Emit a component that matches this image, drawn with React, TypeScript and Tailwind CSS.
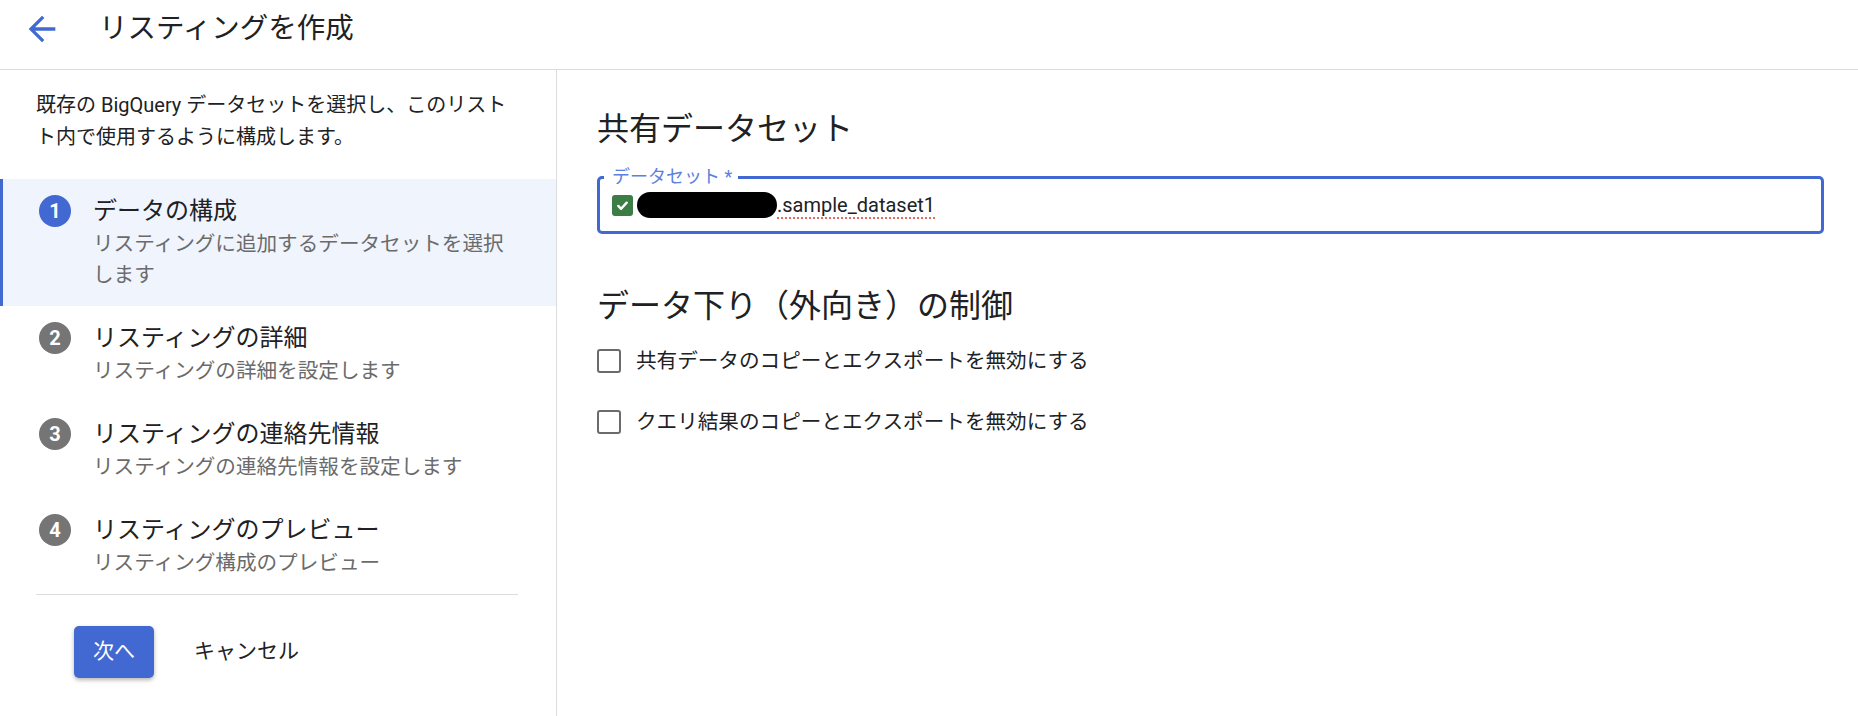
import React from "react";

const steps = [
  { n: 1, title: "データの構成", sub: ["リスティングに追加するデータセットを選択", "します"], active: true },
  { n: 2, title: "リスティングの詳細", sub: ["リスティングの詳細を設定します"], active: false },
  { n: 3, title: "リスティングの連絡先情報", sub: ["リスティングの連絡先情報を設定します"], active: false },
  { n: 4, title: "リスティングのプレビュー", sub: ["リスティング構成のプレビュー"], active: false },
];

const options = [
  "共有データのコピーとエクスポートを無効にする",
  "クエリ結果のコピーとエクスポートを無効にする",
];

function Step({ n, title, sub, active }: { n: number; title: string; sub: string[]; active: boolean }) {
  return (
    <div
      className={`flex border-l-[3px] pl-[36px] pr-[20px] pt-[16px] pb-[15px] ${
        active ? "border-[#4169d1] bg-[#eff4fd]" : "border-transparent"
      }`}
    >
      <div
        className={`flex h-[32px] w-[32px] shrink-0 items-center justify-center rounded-full text-[20px] font-bold text-white ${
          active ? "bg-[#4169d1]" : "bg-[#757575]"
        }`}
      >
        {n}
      </div>
      <div className="ml-[22px]">
        <div className="whitespace-nowrap text-[24px] leading-[32px] text-[#202124]">{title}</div>
        <div className="mt-[2px] whitespace-nowrap text-[20.6px] leading-[31px] text-[#6b6b6b]">
          {sub.map((line) => (
            <div key={line}>{line}</div>
          ))}
        </div>
      </div>
    </div>
  );
}

export default function App() {
  return (
    <div
      className="flex h-[716px] w-full flex-col bg-white text-[#202124]"
      style={{ fontFamily: "Roboto, 'Noto Sans CJK JP', sans-serif" }}
    >
      <header className="flex h-[70px] shrink-0 items-center border-b border-[#dadce0] pb-[11px] pl-[22px]">
        <svg width="40" height="40" viewBox="0 0 24 24" fill="#4169d1">
          <path d="M20 11H7.83l5.59-5.59L12 4l-8 8 8 8 1.41-1.41L7.83 13H20v-2z" />
        </svg>
        <h1 className="ml-[37px] text-[28.5px] leading-[36px] font-normal text-[#202124]">リスティングを作成</h1>
      </header>

      <div className="flex min-h-0 flex-1">
        <aside className="flex w-[557px] shrink-0 flex-col border-r border-[#dadce0]">
          <p className="whitespace-nowrap px-[36px] pt-[19px] text-[20px] leading-[32px] text-[#202124]">
            既存の BigQuery データセットを選択し、このリスト
            <br />
            ト内で使用するように構成します。
          </p>

          <div className="mt-[26px]">
            {steps.map((s) => (
              <Step key={s.n} {...s} />
            ))}
          </div>

          <div className="ml-[36px] mr-[38px] border-t border-[#dadce0]" />

          <div className="flex items-center pl-[74px] pt-[31px]">
            <button
              type="button"
              className="h-[52px] w-[80px] rounded-[5px] bg-[#4169d1] text-[21px] text-white shadow-[0_2px_4px_rgba(0,0,0,0.3)]"
            >
              次へ
            </button>
            <button type="button" className="ml-[40px] text-[21px] text-[#202124]">
              キャンセル
            </button>
          </div>
        </aside>

        <main className="flex-1 pl-[40px] pr-[34px] pt-[39px]">
          <h2 className="text-[32px] leading-[40px] font-normal text-[#202124]">共有データセット</h2>

          <div className="relative mt-[27px] flex h-[58px] items-center rounded-[5px] border-[3px] border-[#4169d1] pl-[12px]">
            <span className="absolute left-[4px] top-[-12px] bg-white pl-[8px] pr-[6px] text-[18px] leading-[20px] text-[#5b80dd]">
              データセット *
            </span>
            <span className="flex h-[21px] w-[21px] items-center justify-center rounded-[3px] bg-[#3b7d45]">
              <svg width="15" height="15" viewBox="0 0 16 16" fill="none" stroke="white" strokeWidth="2.6" strokeLinecap="round" strokeLinejoin="round">
                <path d="M3.5 8.5l3 3L12.5 5" />
              </svg>
            </span>
            <span className="ml-[4px] h-[26px] w-[140px] rounded-full bg-black" />
            <span className="text-[20px] leading-[26px] text-[#202124] underline decoration-dotted decoration-[#e8685d] decoration-2 underline-offset-[5px]">
              .sample_dataset1
            </span>
          </div>

          <h2 className="mt-[52px] text-[32px] leading-[40px] font-normal text-[#202124]">
            データ下り（外向き）の制御
          </h2>

          <div className="mt-[15px] flex flex-col gap-[21px]">
            {options.map((o) => (
              <label key={o} className="flex h-[40px] items-center">
                <span className="h-[24px] w-[24px] rounded-[3px] border-[2.5px] border-[#6b6b6b]" />
                <span className="ml-[15px] text-[20.6px] text-[#202124]">{o}</span>
              </label>
            ))}
          </div>
        </main>
      </div>
    </div>
  );
}
